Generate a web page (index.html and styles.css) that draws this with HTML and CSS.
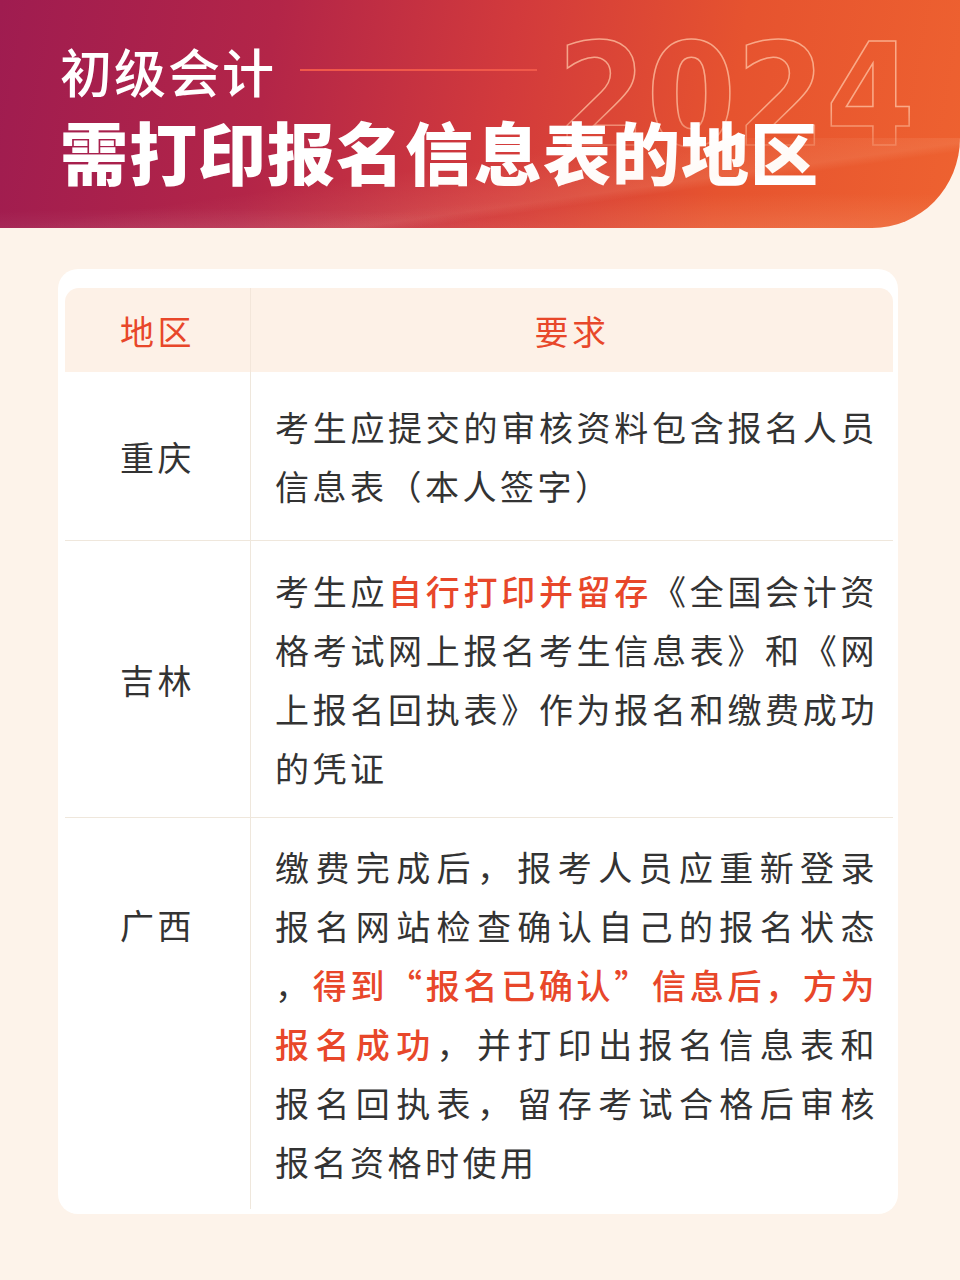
FILE: index.html
```html
<!DOCTYPE html>
<html lang="zh-CN">
<head>
<meta charset="utf-8">
<title>初级会计 需打印报名信息表的地区</title>
<link rel="stylesheet" href="styles.css">
</head>
<body>
<header class="hero">
  <div class="hero-year" aria-hidden="true">2024</div>
  <div class="hero-top">
    <span class="hero-kicker">初级会计</span>
    <span class="hero-rule"></span>
  </div>
  <h1 class="hero-title">需打印报名信息表的地区</h1>
</header>

<main class="card">
  <div class="table">
    <div class="row row-head">
      <div class="cell cell-region">地区</div>
      <div class="cell cell-req cell-head-req">要求</div>
    </div>
    <div class="row row-first">
      <div class="cell cell-region">重庆</div>
      <div class="cell cell-req">
        <span class="ln">考生应提交的审核资料包含报名人员</span>
        <span class="ln ln-last">信息表（本人签字）</span>
      </div>
    </div>
    <div class="row row-mid">
      <div class="cell cell-region">吉林</div>
      <div class="cell cell-req">
        <span class="ln">考生应<em class="hl">自行打印并留存</em>《全国会计资</span>
        <span class="ln">格考试网上报名考生信息表》和《网</span>
        <span class="ln">上报名回执表》作为报名和缴费成功</span>
        <span class="ln ln-last">的凭证</span>
      </div>
    </div>
    <div class="row row-last">
      <div class="cell cell-region cell-region-top">广西</div>
      <div class="cell cell-req">
        <span class="ln">缴费完成后，报考人员应重新登录</span>
        <span class="ln">报名网站检查确认自己的报名状态</span>
        <span class="ln">，<em class="hl">得到“报名已确认”信息后，方为</em></span>
        <span class="ln"><em class="hl">报名成功</em>，并打印出报名信息表和</span>
        <span class="ln">报名回执表，留存考试合格后审核</span>
        <span class="ln ln-last">报名资格时使用</span>
      </div>
    </div>
  </div>
</main>
</body>
</html>
```

FILE: styles.css
```css
html, body {
  margin: 0;
  padding: 0;
}

body {
  width: 960px;
  min-height: 1280px;
  background: #fdf3ea;
  font-family: "Noto Sans CJK SC", "Noto Sans", sans-serif;
  color: #333333;
}

/* ---------- hero ---------- */
.hero {
  position: relative;
  height: 228px;
  box-sizing: border-box;
  padding: 41px 0 0 60px;
  overflow: hidden;
  border-bottom-right-radius: 88px 90px;
  background: linear-gradient(100deg, #9f1c50 0%, #b32548 28%, #d23a3c 52%, #e6532f 75%, #ee6230 100%);
}

.hero::after {
  content: "";
  position: absolute;
  left: 0;
  right: 0;
  bottom: 0;
  height: 90px;
  background:
    radial-gradient(ellipse 70% 60% at 20% 120%, rgba(255, 255, 255, 0.12), transparent 70%),
    radial-gradient(ellipse 80% 70% at 85% 110%, rgba(255, 200, 160, 0.22), transparent 70%),
    linear-gradient(172deg, transparent 40%, rgba(255, 210, 180, 0.12) 62%, transparent 66%);
  pointer-events: none;
}

.hero-year {
  position: absolute;
  left: 557px;
  top: 24px;
  font-family: "DejaVu Sans Condensed", "DejaVu Sans", sans-serif;
  font-stretch: condensed;
  font-weight: 700;
  font-size: 143px;
  line-height: 1;
  letter-spacing: 0;
  color: transparent;
  -webkit-text-stroke: 1.5px rgba(255, 196, 165, 0.75);
  -webkit-mask-image: linear-gradient(to bottom, #000 60%, rgba(0, 0, 0, 0.15) 95%);
  mask-image: linear-gradient(to bottom, #000 60%, rgba(0, 0, 0, 0.15) 95%);
}

.hero-top {
  position: relative;
  display: flex;
  align-items: center;
  gap: 24px;
  height: 60px;
}

.hero-kicker {
  font-size: 52px;
  font-weight: 500;
  line-height: 60px;
  letter-spacing: 2px;
  color: #ffffff;
}

.hero-rule {
  width: 237px;
  height: 2px;
  background: #f0584a;
  margin-top: -2px;
}

.hero-title {
  position: relative;
  margin: 10px 0 0;
  font-size: 68px;
  font-weight: 900;
  line-height: 80px;
  letter-spacing: 1px;
  color: #ffffff;
}

/* ---------- card / table ---------- */
.card {
  margin: 41px 62px 0 58px;
  padding: 19px 5px 5px 7px;
  background: #ffffff;
  border-radius: 20px;
}

.table {
  display: flex;
  flex-direction: column;
}

.row {
  display: grid;
  grid-template-columns: 185px 1fr;
}

.row + .row {
  border-top: 1px solid #efe7dc;
}

.row-head + .row {
  border-top: none;
}

.row-head {
  height: 84px;
  background: #fdf1e7;
  border-radius: 14px 14px 0 0;
}

.cell {
  font-size: 34px;
  line-height: 59px;
  letter-spacing: 3.5px;
}

.cell-region {
  display: flex;
  align-items: center;
  justify-content: center;
  padding-left: 0;
  color: #333333;
}

.row-head .cell-region,
.cell-head-req {
  color: #e8472a;
}

.cell-req {
  border-left: 1px solid #efe7dc;
  padding: 20px 15px 20px 24px;
}

.cell-head-req {
  display: flex;
  align-items: center;
  justify-content: center;
  padding: 0;
  border-left-color: #f3e6da;
}

.row-first .cell-req {
  padding-top: 25px;
  padding-bottom: 25px;
}

.row-last .cell-req {
  padding-top: 19px;
  padding-bottom: 18px;
}

.cell-region-top {
  align-items: flex-start;
  padding-top: 77px;
}

.ln {
  display: block;
  white-space: nowrap;
  text-align: justify;
  text-align-last: justify;
}

.ln-last {
  text-align-last: left;
}

.hl {
  font-style: normal;
  font-weight: 500;
  color: #e8472a;
}
```
